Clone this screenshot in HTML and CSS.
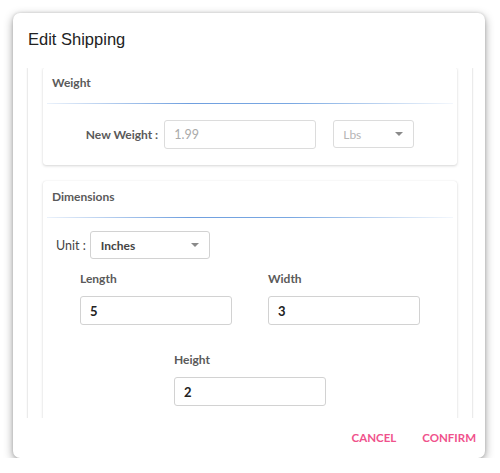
FILE: index.html
```html
<!DOCTYPE html>
<html>
<head>
<meta charset="utf-8">
<link rel="stylesheet" href="styles.css">
</head>
<body>
<div class="dialog">
  <div class="dialog-title">Edit Shipping</div>
  <div class="dialog-content">
    <div class="paper">
      <div class="card card-first">
        <div class="card-header">Weight</div>
        <div class="divider"></div>
        <div class="weight-row">
          <span class="label">New Weight :</span>
          <div class="input input-weight disabled">1.99</div>
          <div class="select select-lbs disabled"><span>Lbs</span><span class="arrow"></span></div>
        </div>
      </div>
      <div class="card">
        <div class="card-header">Dimensions</div>
        <div class="divider"></div>
        <div class="unit-row">
          <span class="label">Unit :</span>
          <div class="select select-unit"><span>Inches</span><span class="arrow"></span></div>
        </div>
        <div class="dim-grid">
          <div class="field">
            <div class="label">Length</div>
            <div class="input value">5</div>
          </div>
          <div class="field">
            <div class="label">Width</div>
            <div class="input value">3</div>
          </div>
        </div>
        <div class="dim-single">
          <div class="field">
            <div class="label">Height</div>
            <div class="input value">2</div>
          </div>
        </div>
      </div>
    </div>
  </div>
  <div class="dialog-actions">
    <span class="btn">CANCEL</span>
    <span class="btn">CONFIRM</span>
  </div>
</div>
</body>
</html>
```

FILE: styles.css
```css
html, body {
  margin: 0;
  padding: 0;
  background: #ffffff;
}
body {
  padding: 13px 0 0 13px;
  font-family: Lato, "Open Sans", sans-serif;
}
.dialog {
  width: 472px;
  height: 445px;
  background: #fff;
  border-radius: 7px;
  box-shadow: 0 3px 10px rgba(0,0,0,0.38), 0 0 3px rgba(0,0,0,0.15);
  display: flex;
  flex-direction: column;
  overflow: hidden;
}
.dialog-title {
  flex: 0 0 55px;
  box-sizing: border-box;
  padding: 16px 0 0 15px;
  font-family: "Liberation Sans", Arial, sans-serif;
  font-size: 16.5px;
  line-height: 20px;
  color: #222;
}
.dialog-content {
  flex: 0 0 350px;
  overflow: hidden;
  padding: 0 13px 0 15px;
}
.paper {
  padding: 0 15px 20px;
  box-shadow: 0 0 2px rgba(0,0,0,0.18), 0 1px 2px rgba(0,0,0,0.08);
  background: #fff;
}
.card {
  background: #fff;
  border-radius: 3px;
  box-shadow: 0 1px 3px rgba(0,0,0,0.16), 0 0 1px rgba(0,0,0,0.1);
  margin-bottom: 16px;
  padding-bottom: 16px;
}
.card-first {
  margin-top: -1px;
}
.card-header {
  padding: 8px 9px 0;
  font-size: 12px;
  line-height: 15px;
  font-weight: 700;
  color: #5a5a5a;
}
.divider {
  height: 1px;
  margin: 13px 4px 0;
  background: linear-gradient(to right, rgba(120,165,225,0.15), #6f9fdf 35%, #7aa8e2 60%, rgba(140,180,230,0.1));
}
.label {
  font-size: 12px;
  line-height: 15px;
  font-weight: 700;
  color: #5a5a5a;
}
.weight-row {
  margin-top: 16px;
  display: flex;
  align-items: center;
  justify-content: center;
}
.weight-row .label {
  margin-right: 6px;
}
.input {
  box-sizing: border-box;
  height: 29px;
  width: 152px;
  border: 1px solid #d2d2d2;
  border-radius: 3px;
  padding: 0 9px;
  display: flex;
  align-items: center;
  font-size: 12.5px;
  color: #333;
}
.input.disabled {
  color: #aaa;
  border-color: #dcdcdc;
}
.input.value {
  font-weight: 700;
  font-size: 13px;
  color: #222;
}
.select {
  box-sizing: border-box;
  height: 28px;
  border: 1px solid #d2d2d2;
  border-radius: 3px;
  padding: 0 10px 0 9px;
  display: flex;
  align-items: center;
  justify-content: space-between;
  font-size: 12px;
  color: #444;
}
.select.disabled {
  color: #b5b5b5;
  border-color: #dcdcdc;
}
.select-lbs {
  width: 81px;
  margin-left: 17px;
  margin-top: -1px;
}
.select-unit {
  width: 120px;
  font-weight: 700;
  padding-left: 10px;
}
.arrow {
  width: 0;
  height: 0;
  border-left: 4px solid transparent;
  border-right: 4px solid transparent;
  border-top: 4px solid #8a8a8a;
}
.unit-row {
  margin-top: 13px;
  padding-left: 13px;
  display: flex;
  align-items: center;
}
.unit-row .label {
  font-weight: 400;
  font-size: 12.5px;
  color: #444;
  margin-right: 4px;
}
.dim-grid {
  margin-top: 12px;
  display: grid;
  grid-template-columns: 152px 152px;
  column-gap: 36px;
  justify-content: center;
}
.dim-single {
  margin-top: 27px;
  display: flex;
  justify-content: center;
}
.field .label {
  margin-bottom: 10px;
}
.dialog-actions {
  flex: 1;
  display: flex;
  align-items: center;
  justify-content: flex-end;
  gap: 26px;
  padding: 0 9px 2px 0;
}
.btn {
  font-size: 11.5px;
  font-weight: 700;
  color: #f0528c;
}
```
